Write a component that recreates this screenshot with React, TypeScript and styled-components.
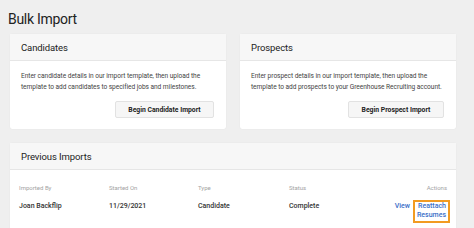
import React from 'react'
import styled, { createGlobalStyle } from 'styled-components'

const GlobalStyle = createGlobalStyle`
  body {
    margin: 0;
    background: #efefef;
    font-family: Roboto, "Liberation Sans", sans-serif;
    color: #222;
  }
`

const Page = styled.div`
  padding: 10px 18px 0 10px;
  height: 228px;
  box-sizing: border-box;
  overflow: hidden;
`

const Title = styled.h1`
  margin: 0 0 6px -2px;
  font-size: 14px;
  line-height: 18px;
  font-weight: 400;
  letter-spacing: -0.3px;
  color: #222;
`

const CardRow = styled.div`
  display: grid;
  grid-template-columns: 1fr 1fr;
  gap: 14px;
  margin-bottom: 14px;
`

const Card = styled.section`
  background: #fff;
  border-radius: 2px;
  box-shadow: 0 0 1px rgba(0, 0, 0, 0.12);
`

const CardHeader = styled.div`
  height: 26px;
  display: flex;
  align-items: center;
  padding: 0 11px;
  background: #f7f7f7;
  border-bottom: 1px solid #e6e6e6;
  font-size: 9.5px;
  font-weight: 400;
  letter-spacing: -0.1px;
  color: #222;
`

const CardBody = styled.div`
  padding: 10px 12px 11px 11px;
  display: flex;
  flex-direction: column;
`

const Description = styled.p`
  margin: 0 0 9px;
  font-size: 6.6px;
  line-height: 10.5px;
  color: #444;
  white-space: nowrap;
  letter-spacing: -0.05px;
`

const Button = styled.button<{ $w: number }>`
  align-self: flex-end;
  height: 17px;
  padding: 0 11px;
  background: #f6f6f6;
  border: 1px solid #e2e2e2;
  border-radius: 2px;
  font-family: inherit;
  font-size: 6.8px;
  font-weight: 700;
  color: #222;
  min-width: ${(p) => p.$w}px;
`

const Table = styled.div`
  padding: 13px 9px 10px 9px;
  display: grid;
  grid-template-columns: 90px 89px 91px 1fr auto;
  row-gap: 10px;
  align-items: start;
`

const HeadCell = styled.div<{ $right?: boolean }>`
  font-size: 6px;
  color: #a3a3a3;
  line-height: 9px;
  text-align: ${(p) => (p.$right ? 'right' : 'left')};
`

const Cell = styled.div`
  font-size: 7px;
  font-weight: 500;
  line-height: 9px;
  color: #333;
`

const Actions = styled.div`
  display: flex;
  align-items: flex-start;
  gap: 3px;
  margin-right: -3px;
`

const Link = styled.a`
  font-size: 7px;
  font-weight: 500;
  line-height: 9px;
  color: #3b6fc8;
  text-decoration: none;
`

const Highlight = styled.span`
  border: 2px solid #f29b22;
  padding: 0 2px 1px 2px;
  display: flex;
  flex-direction: column;
  align-items: flex-end;
  margin-top: -2px;
`

export default function App() {
  return (
    <Page>
      <GlobalStyle />
      <Title>Bulk Import</Title>
      <CardRow>
        <Card>
          <CardHeader>Candidates</CardHeader>
          <CardBody>
            <Description>
              Enter candidate details in our import template, then upload the
              <br />
              template to add candidates to specified jobs and milestones.
            </Description>
            <Button $w={99}>Begin Candidate Import</Button>
          </CardBody>
        </Card>
        <Card>
          <CardHeader>Prospects</CardHeader>
          <CardBody>
            <Description>
              Enter prospect details in our import template, then upload the
              <br />
              template to add prospects to your Greenhouse Recruiting account.
            </Description>
            <Button $w={96}>Begin Prospect Import</Button>
          </CardBody>
        </Card>
      </CardRow>
      <Card>
        <CardHeader>Previous Imports</CardHeader>
        <Table>
          <HeadCell>Imported By</HeadCell>
          <HeadCell>Started On</HeadCell>
          <HeadCell>Type</HeadCell>
          <HeadCell>Status</HeadCell>
          <HeadCell $right>Actions</HeadCell>
          <Cell>Joan Backflip</Cell>
          <Cell>11/29/2021</Cell>
          <Cell>Candidate</Cell>
          <Cell>Complete</Cell>
          <Actions>
            <Link href="#">View</Link>
            <Highlight>
              <Link href="#">Reattach</Link>
              <Link href="#">Resumes</Link>
            </Highlight>
          </Actions>
        </Table>
      </Card>
    </Page>
  )
}
